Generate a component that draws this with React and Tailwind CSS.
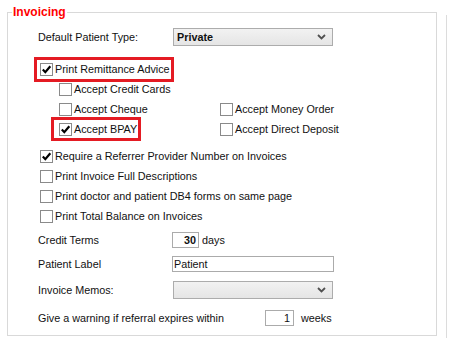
import React from 'react';

const Check = ({ checked }) => (
    <span className="w-[13px] h-[13px] shrink-0 border border-[#8a8a8a] bg-white flex items-center justify-center">
        {checked && (
            <svg width="11" height="11" viewBox="0 0 11 11">
                <path d="M1.8 5.6 L4.3 8.2 L9.3 2.2" fill="none" stroke="#000" strokeWidth="2.2" />
            </svg>
        )}
    </span>
);

const CheckRow = ({ checked, label }) => (
    <span className="flex items-center whitespace-nowrap">
        <Check checked={checked} />
        <span className="ml-[2px]">{label}</span>
    </span>
);

const Chevron = () => (
    <svg width="9" height="6" viewBox="0 0 9 6" className="shrink-0">
        <path d="M1 1 L4.5 4.5 L8 1" fill="none" stroke="#505050" strokeWidth="1.8" />
    </svg>
);

const Combo = ({ value }) => (
    <div className="w-[160px] h-[18px] border border-[#acacac] bg-gradient-to-b from-[#f2f2f2] to-[#e5e5e5] flex items-center justify-between pl-[3px] pr-[6px]">
        <span className="font-bold">{value}</span>
        <Chevron />
    </div>
);

const App = () => {
    return (
        <div className="w-[461px] h-[357px] bg-white flex font-['Liberation_Sans',Arial,sans-serif] text-[10.8px] leading-[13px] text-[#111]">
            <fieldset className="ml-[7px] mt-[5px] w-[430px] h-[331px] border border-[#d9d9d9]">
                <legend className="ml-[4px] px-[1px] text-[12px] leading-[14px] font-bold text-[#ff0000]">Invoicing</legend>
                <div className="flex flex-col pt-[9px] pl-[30px]">
                    <div className="h-[18px] flex items-center">
                        <span className="w-[135px]">Default Patient Type:</span>
                        <Combo value="Private" />
                    </div>

                    <div className="mt-[14px] h-[19px] flex items-center">
                        <span className="ml-[2px] w-[128px] h-[13px] flex items-center whitespace-nowrap outline-[3px] outline-solid outline-[#e41b23] outline-offset-[3px]">
                            <Check checked />
                            <span className="ml-[2px]">Print Remittance Advice</span>
                        </span>
                    </div>
                    <div className="h-[20px] flex items-center pl-[21px]">
                        <CheckRow label="Accept Credit Cards" />
                    </div>
                    <div className="h-[20px] flex items-center pl-[21px]">
                        <span className="w-[161px]"><CheckRow label="Accept Cheque" /></span>
                        <CheckRow label="Accept Money Order" />
                    </div>
                    <div className="h-[20px] flex items-center pl-[19px]">
                        <span className="w-[163px] flex">
                            <span className="pl-[2px] w-[78px] h-[12px] flex items-center whitespace-nowrap outline-[3px] outline-solid outline-[#e41b23] outline-offset-[3px]">
                                <Check checked />
                                <span className="ml-[2px]">Accept BPAY</span>
                            </span>
                        </span>
                        <CheckRow label="Accept Direct Deposit" />
                    </div>

                    <div className="mt-[7px] h-[20px] flex items-center pl-[2px]">
                        <CheckRow checked label="Require a Referrer Provider Number on Invoices" />
                    </div>
                    <div className="h-[20px] flex items-center pl-[2px]">
                        <CheckRow label="Print Invoice Full Descriptions" />
                    </div>
                    <div className="h-[20px] flex items-center pl-[2px]">
                        <CheckRow label="Print doctor and patient DB4 forms on same page" />
                    </div>
                    <div className="h-[20px] flex items-center pl-[2px]">
                        <CheckRow label="Print Total Balance on Invoices" />
                    </div>

                    <div className="mt-[4px] h-[20px] flex items-center">
                        <span className="w-[134px]">Credit Terms</span>
                        <span className="w-[27px] h-[16px] border border-[#ababab] bg-white flex items-center justify-end pr-[2px] font-bold">30</span>
                        <span className="ml-[3px]">days</span>
                    </div>
                    <div className="mt-[4px] h-[20px] flex items-center">
                        <span className="w-[134px]">Patient Label</span>
                        <span className="w-[162px] h-[16px] border border-[#ababab] bg-white flex items-center pl-[1px]">Patient</span>
                    </div>
                    <div className="mt-[6px] h-[20px] flex items-center">
                        <span className="w-[135px]">Invoice Memos:</span>
                        <Combo value="" />
                    </div>
                    <div className="mt-[8px] h-[20px] flex items-center">
                        <span className="w-[227px]">Give a warning if referral expires within</span>
                        <span className="w-[29px] h-[16px] border border-[#ababab] bg-white flex items-center justify-end pr-[3px]">1</span>
                        <span className="ml-[7px]">weeks</span>
                    </div>
                </div>
            </fieldset>
            <div className="ml-[9px] mt-[15px] w-px h-[323px] bg-[#dcdcdc]" />
        </div>
    );
};

export default App;
